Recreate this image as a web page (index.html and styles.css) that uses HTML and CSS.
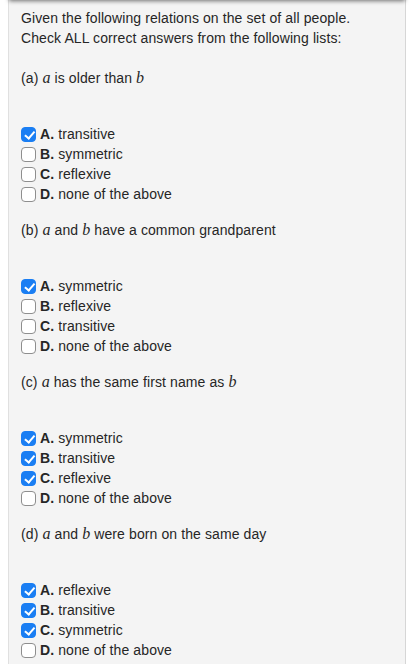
FILE: index.html
```html
<!DOCTYPE html>
<html>
<head>
<meta charset="utf-8">
<link rel="stylesheet" href="styles.css">
</head>
<body>
<div class="panel">
  <div class="topshadow"></div>
  <p class="intro">Given the following relations on the set of all people.<br>Check ALL correct answers from the following lists:</p>

  <div class="part">
    <p class="q">(a) <span class="m">a</span> is older than <span class="m">b</span></p>
    <ul class="opts">
      <li><span class="cb on"></span><b>A.</b> transitive</li>
      <li><span class="cb"></span><b>B.</b> symmetric</li>
      <li><span class="cb"></span><b>C.</b> reflexive</li>
      <li><span class="cb"></span><b>D.</b> none of the above</li>
    </ul>
  </div>

  <div class="part">
    <p class="q">(b) <span class="m">a</span> and <span class="m">b</span> have a common grandparent</p>
    <ul class="opts">
      <li><span class="cb on"></span><b>A.</b> symmetric</li>
      <li><span class="cb"></span><b>B.</b> reflexive</li>
      <li><span class="cb"></span><b>C.</b> transitive</li>
      <li><span class="cb"></span><b>D.</b> none of the above</li>
    </ul>
  </div>

  <div class="part">
    <p class="q">(c) <span class="m">a</span> has the same first name as <span class="m">b</span></p>
    <ul class="opts">
      <li><span class="cb on"></span><b>A.</b> symmetric</li>
      <li><span class="cb on"></span><b>B.</b> transitive</li>
      <li><span class="cb on"></span><b>C.</b> reflexive</li>
      <li><span class="cb"></span><b>D.</b> none of the above</li>
    </ul>
  </div>

  <div class="part">
    <p class="q">(d) <span class="m">a</span> and <span class="m">b</span> were born on the same day</p>
    <ul class="opts">
      <li><span class="cb on"></span><b>A.</b> reflexive</li>
      <li><span class="cb on"></span><b>B.</b> transitive</li>
      <li><span class="cb on"></span><b>C.</b> symmetric</li>
      <li><span class="cb"></span><b>D.</b> none of the above</li>
    </ul>
  </div>
</div>
</body>
</html>
```

FILE: styles.css
```css
html, body {
  margin: 0;
  padding: 0;
  background: #ffffff;
}
body {
  font-family: "Liberation Sans", Arial, sans-serif;
  font-size: 14px;
  line-height: 20px;
  letter-spacing: 0.1px;
  color: #262626;
}
.panel {
  position: relative;
  margin: 0 8px;
  background: #f4f4f4;
  border-left: 1px solid #e0e0e0;
  border-right: 1px solid #d6d6d6;
  padding: 8px 12px 20px 12px;
  min-height: 700px;
}
.topshadow {
  position: absolute;
  left: 0;
  right: 0;
  top: -6px;
  height: 6px;
  box-shadow: 0 1px 4px rgba(0,0,0,0.55);
  background: #888;
}
p {
  margin: 0;
}
.intro {
  margin-bottom: 20px;
}
.q {
  height: 20px;
  margin-bottom: 36px;
}
.m {
  font-family: "Liberation Serif", "Times New Roman", serif;
  font-style: italic;
  font-size: 16px;
  line-height: 1;
}
.opts {
  list-style: none;
  margin: 0 0 16px 0;
  padding: 0;
}
.opts li {
  display: flex;
  align-items: center;
  height: 20px;
}
.opts b {
  font-weight: bold;
  margin-right: 4px;
}
.cb {
  box-sizing: border-box;
  width: 15px;
  height: 15px;
  border: 1px solid #8e8e8e;
  border-radius: 4px;
  background: #fff;
  margin-right: 4px;
  flex: none;
  position: relative;
}
.cb.on {
  background: #1a7ef3;
  border-color: #1a7ef3;
}
.cb.on::after {
  content: "";
  position: absolute;
  left: 4.5px;
  top: 1.5px;
  width: 3.5px;
  height: 7.5px;
  border: solid #fff;
  border-width: 0 2.5px 2.5px 0;
  transform: rotate(40deg);
}
```
